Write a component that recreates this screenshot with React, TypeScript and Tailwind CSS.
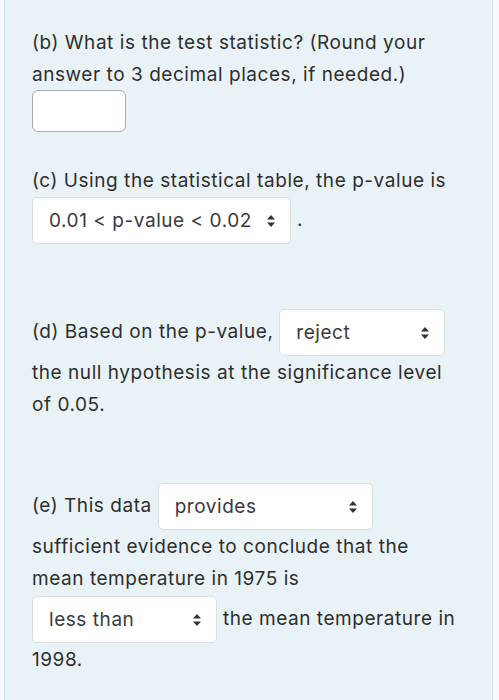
import React from "react";

// little up/down arrows like the native iOS select
function Arrows() {
  return (
    <svg width="10" height="14" viewBox="0 0 10 14" className="shrink-0">
      <path d="M5 1 L9 5.5 L1 5.5 Z" fill="#333" />
      <path d="M5 13 L9 8.5 L1 8.5 Z" fill="#333" />
    </svg>
  );
}

type SelectProps = {
  value: string
  width: string
}

function FakeSelect({ value, width }: SelectProps) {
  return (
    <span
      className={`my-[1px] inline-flex h-[47px] items-center justify-between rounded-[5px] border border-[#d9dee1] bg-white pl-4 pr-[14px] align-middle text-[#3a3a3a] ${width}`}
    >
      <span>{value}</span>
      <Arrows />
    </span>
  );
}

export default function App() {
  return (
    <div className="min-h-[700px] bg-[#f7fafb] font-['Inter',Arial,sans-serif] text-[19px] tracking-[0.55px] text-[#2e2e2e]">
      <div className="ml-[4px] min-h-[700px] w-[489px] border-x border-[#d0e3eb] bg-[#e9f3f7] px-[27px] pt-[27px]">

        {/* part b */}
        <p className="leading-[32px]">
          (b) What is the test statistic? (Round your
          <br />
          answer to 3 decimal places, if needed.)
        </p>
        <div className="mt-[-1px] h-[42px] w-[94px] rounded-[6px] border border-[#a8abad] bg-white" />

        {/* part c */}
        <p className="mt-[33px] leading-[32px]">
          (c) Using the statistical table, the p-value is
        </p>
        <p className="mt-[-1px] leading-[47px]">
          <FakeSelect value="0.01 < p-value < 0.02" width="w-[259px]" /> .
        </p>

        {/* part d */}
        <p className="mt-[63px] leading-[32px]">
          (d) Based on the p-value, <FakeSelect value="reject" width="w-[166px]" />
          <br />
          the null hypothesis at the significance level
          <br />
          of 0.05.
        </p>

        {/* part e */}
        <p className="mt-[61px] leading-[32px]">
          (e) This data <FakeSelect value="provides" width="w-[215px]" />
          <br />
          sufficient evidence to conclude that the
          <br />
          mean temperature in 1975 is
          <br />
          <FakeSelect value="less than" width="w-[185px]" /> the mean temperature in
          <br />
          1998.
        </p>

      </div>
    </div>
  );
}
